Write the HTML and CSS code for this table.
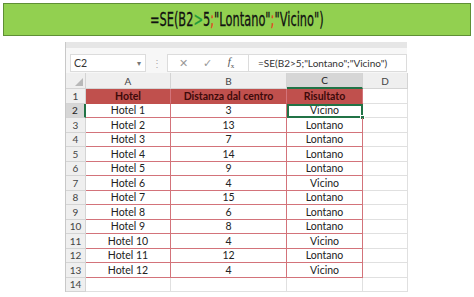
FILE: index.html
```html
<!DOCTYPE html>
<html>
<head>
<meta charset="utf-8">
<link rel="stylesheet" href="styles.css">
</head>
<body>
<div class="banner"><span class="ftext">=SE(B2<span class="gt">&gt;</span>5<span class="sc">;</span>"Lontano"<span class="sc">;</span>"Vicino")</span></div>
<div class="sheet">
  <div class="topstrip"></div>
  <div class="toolbar">
    <div class="namebox"><span>C2</span><span class="drop">▾</span></div>
    <div class="dots">⋮</div>
    <div class="icons">
      <span class="ic">✕</span><span class="ic">✓</span><span class="ic fx"><i>f</i><sub>x</sub></span>
    </div>
    <div class="field">=SE(B2&gt;5;"Lontano";"Vicino")</div>
  </div>
  <div class="grid">
    <div class="corner"><svg width="8" height="8" viewBox="0 0 8 8"><polygon points="8,0 8,8 0,8" fill="#b8b8b8"/></svg></div>
    <div class="ch">A</div><div class="ch">B</div><div class="ch sel">C</div><div class="ch">D</div>

    <div class="rh">1</div><div class="c h">Hotel</div><div class="c h">Distanza dal centro</div><div class="c h">Risultato</div><div class="g"></div>
    <div class="rh sel">2</div><div class="c">Hotel 1</div><div class="c">3</div><div class="c active">Vicino<span class="handle"></span></div><div class="g"></div>
    <div class="rh">3</div><div class="c">Hotel 2</div><div class="c">13</div><div class="c">Lontano</div><div class="g"></div>
    <div class="rh">4</div><div class="c">Hotel 3</div><div class="c">7</div><div class="c">Lontano</div><div class="g"></div>
    <div class="rh">5</div><div class="c">Hotel 4</div><div class="c">14</div><div class="c">Lontano</div><div class="g"></div>
    <div class="rh">6</div><div class="c">Hotel 5</div><div class="c">9</div><div class="c">Lontano</div><div class="g"></div>
    <div class="rh">7</div><div class="c">Hotel 6</div><div class="c">4</div><div class="c">Vicino</div><div class="g"></div>
    <div class="rh">8</div><div class="c">Hotel 7</div><div class="c">15</div><div class="c">Lontano</div><div class="g"></div>
    <div class="rh">9</div><div class="c">Hotel 8</div><div class="c">6</div><div class="c">Lontano</div><div class="g"></div>
    <div class="rh">10</div><div class="c">Hotel 9</div><div class="c">8</div><div class="c">Lontano</div><div class="g"></div>
    <div class="rh">11</div><div class="c">Hotel 10</div><div class="c">4</div><div class="c">Vicino</div><div class="g"></div>
    <div class="rh">12</div><div class="c">Hotel 11</div><div class="c">12</div><div class="c">Lontano</div><div class="g"></div>
    <div class="rh">13</div><div class="c">Hotel 12</div><div class="c">4</div><div class="c">Vicino</div><div class="g"></div>
    <div class="rh">14</div><div class="g"></div><div class="g"></div><div class="g"></div><div class="g"></div>
  </div>
</div>
</body>
</html>
```
FILE: styles.css
```css
* { box-sizing: border-box; }
body {
  margin: 0;
  background: #fff;
  font-family: Lato, "Open Sans", sans-serif;
}
.banner {
  margin: 3px 3px 0 3px;
  height: 33px;
  background: #92d050;
  border: 1px solid #5f8f35;
  display: flex;
  align-items: center;
  justify-content: center;
  font-family: "DejaVu Sans", sans-serif;
  font-size: 19px;
  color: #111;
  padding-bottom: 1px;
}
.ftext {
  display: inline-block;
  transform: scaleX(0.6);
  white-space: nowrap;
  -webkit-text-stroke: 0.3px #111;
}
.banner .gt { color: #1f9a3a; -webkit-text-stroke: 0.3px #1f9a3a; }
.banner .sc { color: #e5401c; -webkit-text-stroke: 0.3px #e5401c; }

.sheet {
  margin: 6px 0 0 65px;
  width: 342px;
  border-left: 1px solid #c8c8c8;
}
.topstrip {
  height: 6px;
  background: #e6e6e6;
}
.toolbar {
  height: 25px;
  background: #f7f7f7;
  display: flex;
  align-items: flex-end;
  padding-bottom: 1px;
  font-size: 10.5px;
  color: #333;
}
.namebox {
  margin-left: 4px;
  width: 76px;
  height: 18px;
  background: #fff;
  border: 1px solid #dcdcdc;
  display: flex;
  align-items: center;
  justify-content: space-between;
  padding: 0 4px 0 3px;
}
.drop { font-size: 8px; color: #777; }
.dots {
  width: 21px;
  height: 18px;
  display: flex;
  align-items: center;
  justify-content: center;
  color: #aaa;
  font-size: 10px;
}
.icons {
  width: 81px;
  height: 18px;
  background: #fff;
  border: 1px solid #dcdcdc;
  border-right: none;
  display: flex;
  align-items: center;
  padding-left: 9px;
  gap: 12px;
  color: #999;
  font-size: 11px;
}
.ic { width: 12px; text-align: center; }
.fx { font-family: "Liberation Serif", serif; color: #555; font-size: 11px; }
.fx sub { font-size: 7px; }
.field {
  flex: 1;
  height: 18px;
  background: #fff;
  border: 1px solid #dcdcdc;
  display: flex;
  align-items: center;
  padding-left: 9px;
  color: #333;
  font-size: 10px;
}

.grid {
  display: grid;
  grid-template-columns: 20px 85px 116px 76px 45px;
  grid-template-rows: 16px repeat(14, 14.5px);
  font-size: 10.5px;
  color: #222;
}
.corner, .ch, .rh {
  background: #efefef;
  border-right: 1px solid #d4d4d4;
  border-bottom: 1px solid #d4d4d4;
  display: flex;
  align-items: center;
  justify-content: center;
  color: #444;
}
.corner { justify-content: flex-end; align-items: flex-end; padding: 0 2px 2px 0; }
.ch { font-size: 10px; }
.rh { font-size: 10px; }
.ch.sel {
  background: #d6d6d6;
  border-bottom: 2px solid #217346;
  color: #222;
}
.rh.sel {
  background: #d6d6d6;
  border-right: 2px solid #217346;
  color: #222;
}
.c {
  border-right: 1px solid #d3737a;
  border-bottom: 1px solid #d3737a;
  display: flex;
  align-items: center;
  justify-content: center;
  position: relative;
}
.c.h {
  background: #c0504d;
  font-weight: bold;
  color: #3d0a0a;
  border-color: #c0504d #d3737a #c0504d #c0504d;
}
.g {
  border-right: 1px solid #e0e0e0;
  border-bottom: 1px solid #e0e0e0;
}
.active {
  outline: 2px solid #217346;
  outline-offset: -2px;
}
.handle {
  position: absolute;
  right: -3px;
  bottom: -3px;
  width: 5px;
  height: 5px;
  background: #217346;
  border: 1px solid #fff;
}
```
